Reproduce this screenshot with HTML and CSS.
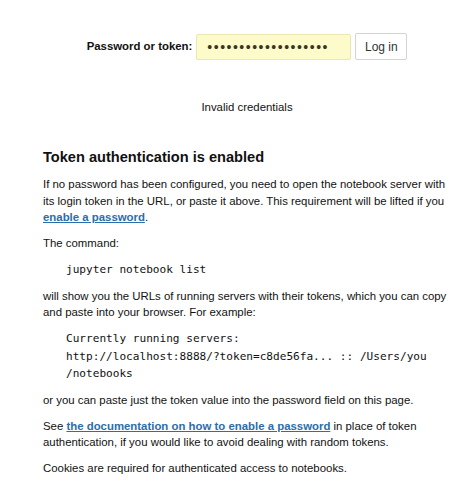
FILE: index.html
```html
<!DOCTYPE html>
<html>
<head>
<meta charset="utf-8">
<link rel="stylesheet" href="styles.css">
</head>
<body>
<div class="page">
  <form class="login">
    <label class="login-label" for="password_input">Password or token:</label>
    <input class="login-input" id="password_input" type="password" value="ABCDEFGHIJKLMNOPQRS">
    <button class="login-button" type="button">Log in</button>
  </form>
  <div class="message">Invalid credentials</div>
  <div class="content">
    <h3 class="title">Token authentication is enabled</h3>
    <p>If no password has been configured, you need to open the notebook server with its login token in the URL, or paste it above. This requirement will be lifted if you <a href="#"><b>enable a password</b></a>.</p>
    <p>The command:</p>
    <pre class="code">jupyter notebook list</pre>
    <p>will show you the URLs of running servers with their tokens, which you can copy and paste into your browser. For example:</p>
    <pre class="code">Currently running servers:
http://localhost:8888/?token=c8de56fa... :: /Users/you
/notebooks</pre>
    <p>or you can paste just the token value into the password field on this page.</p>
    <p>See <a href="#"><b>the documentation on how to enable a password</b></a> in place of token authentication, if you would like to avoid dealing with random tokens.</p>
    <p>Cookies are required for authenticated access to notebooks.</p>
  </div>
</div>
</body>
</html>
```
FILE: styles.css
```css
html, body {
  margin: 0;
  padding: 0;
  background: #fff;
}
body {
  font-family: "Liberation Sans", Arial, sans-serif;
  font-size: 11.4px;
  line-height: 16.5px;
  color: #111;
}
.page {
  padding: 33px 0 0 20px;
}
.login {
  display: flex;
  justify-content: center;
  align-items: center;
  gap: 4px;
  margin: 0;
}
.login-label {
  font-weight: bold;
  font-size: 11.4px;
}
.login-input {
  box-sizing: border-box;
  width: 155px;
  height: 26px;
  border: 1px solid #ebe6b4;
  border-radius: 2px;
  background: #fefbca;
  padding: 0 8px 0 10px;
  font-family: "Liberation Sans", Arial, sans-serif;
  font-size: 14px;
  color: #3a3520;
  letter-spacing: 1.5px;
  outline: none;
}
.login-button {
  box-sizing: border-box;
  height: 27px;
  width: 52px;
  padding: 0;
  background: #fff;
  border: 1px solid #d4d4d4;
  border-radius: 2px;
  font-family: "Liberation Sans", Arial, sans-serif;
  font-size: 12px;
  color: #333;
}
.message {
  text-align: center;
  margin-top: 39px;
  line-height: 16px;
}
.content {
  margin: 32px 0 0 23px;
  width: 410px;
}
.title {
  font-size: 14.6px;
  font-weight: bold;
  margin: 0 0 9px;
  line-height: 20px;
}
p {
  margin: 0 0 9.5px;
}
a {
  color: #2a6eab;
  text-decoration: underline;
}
.code {
  font-family: "DejaVu Sans Mono", monospace;
  font-size: 11.1px;
  line-height: 17.5px;
  margin: 0 0 9px 23px;
  color: #111;
}
```
